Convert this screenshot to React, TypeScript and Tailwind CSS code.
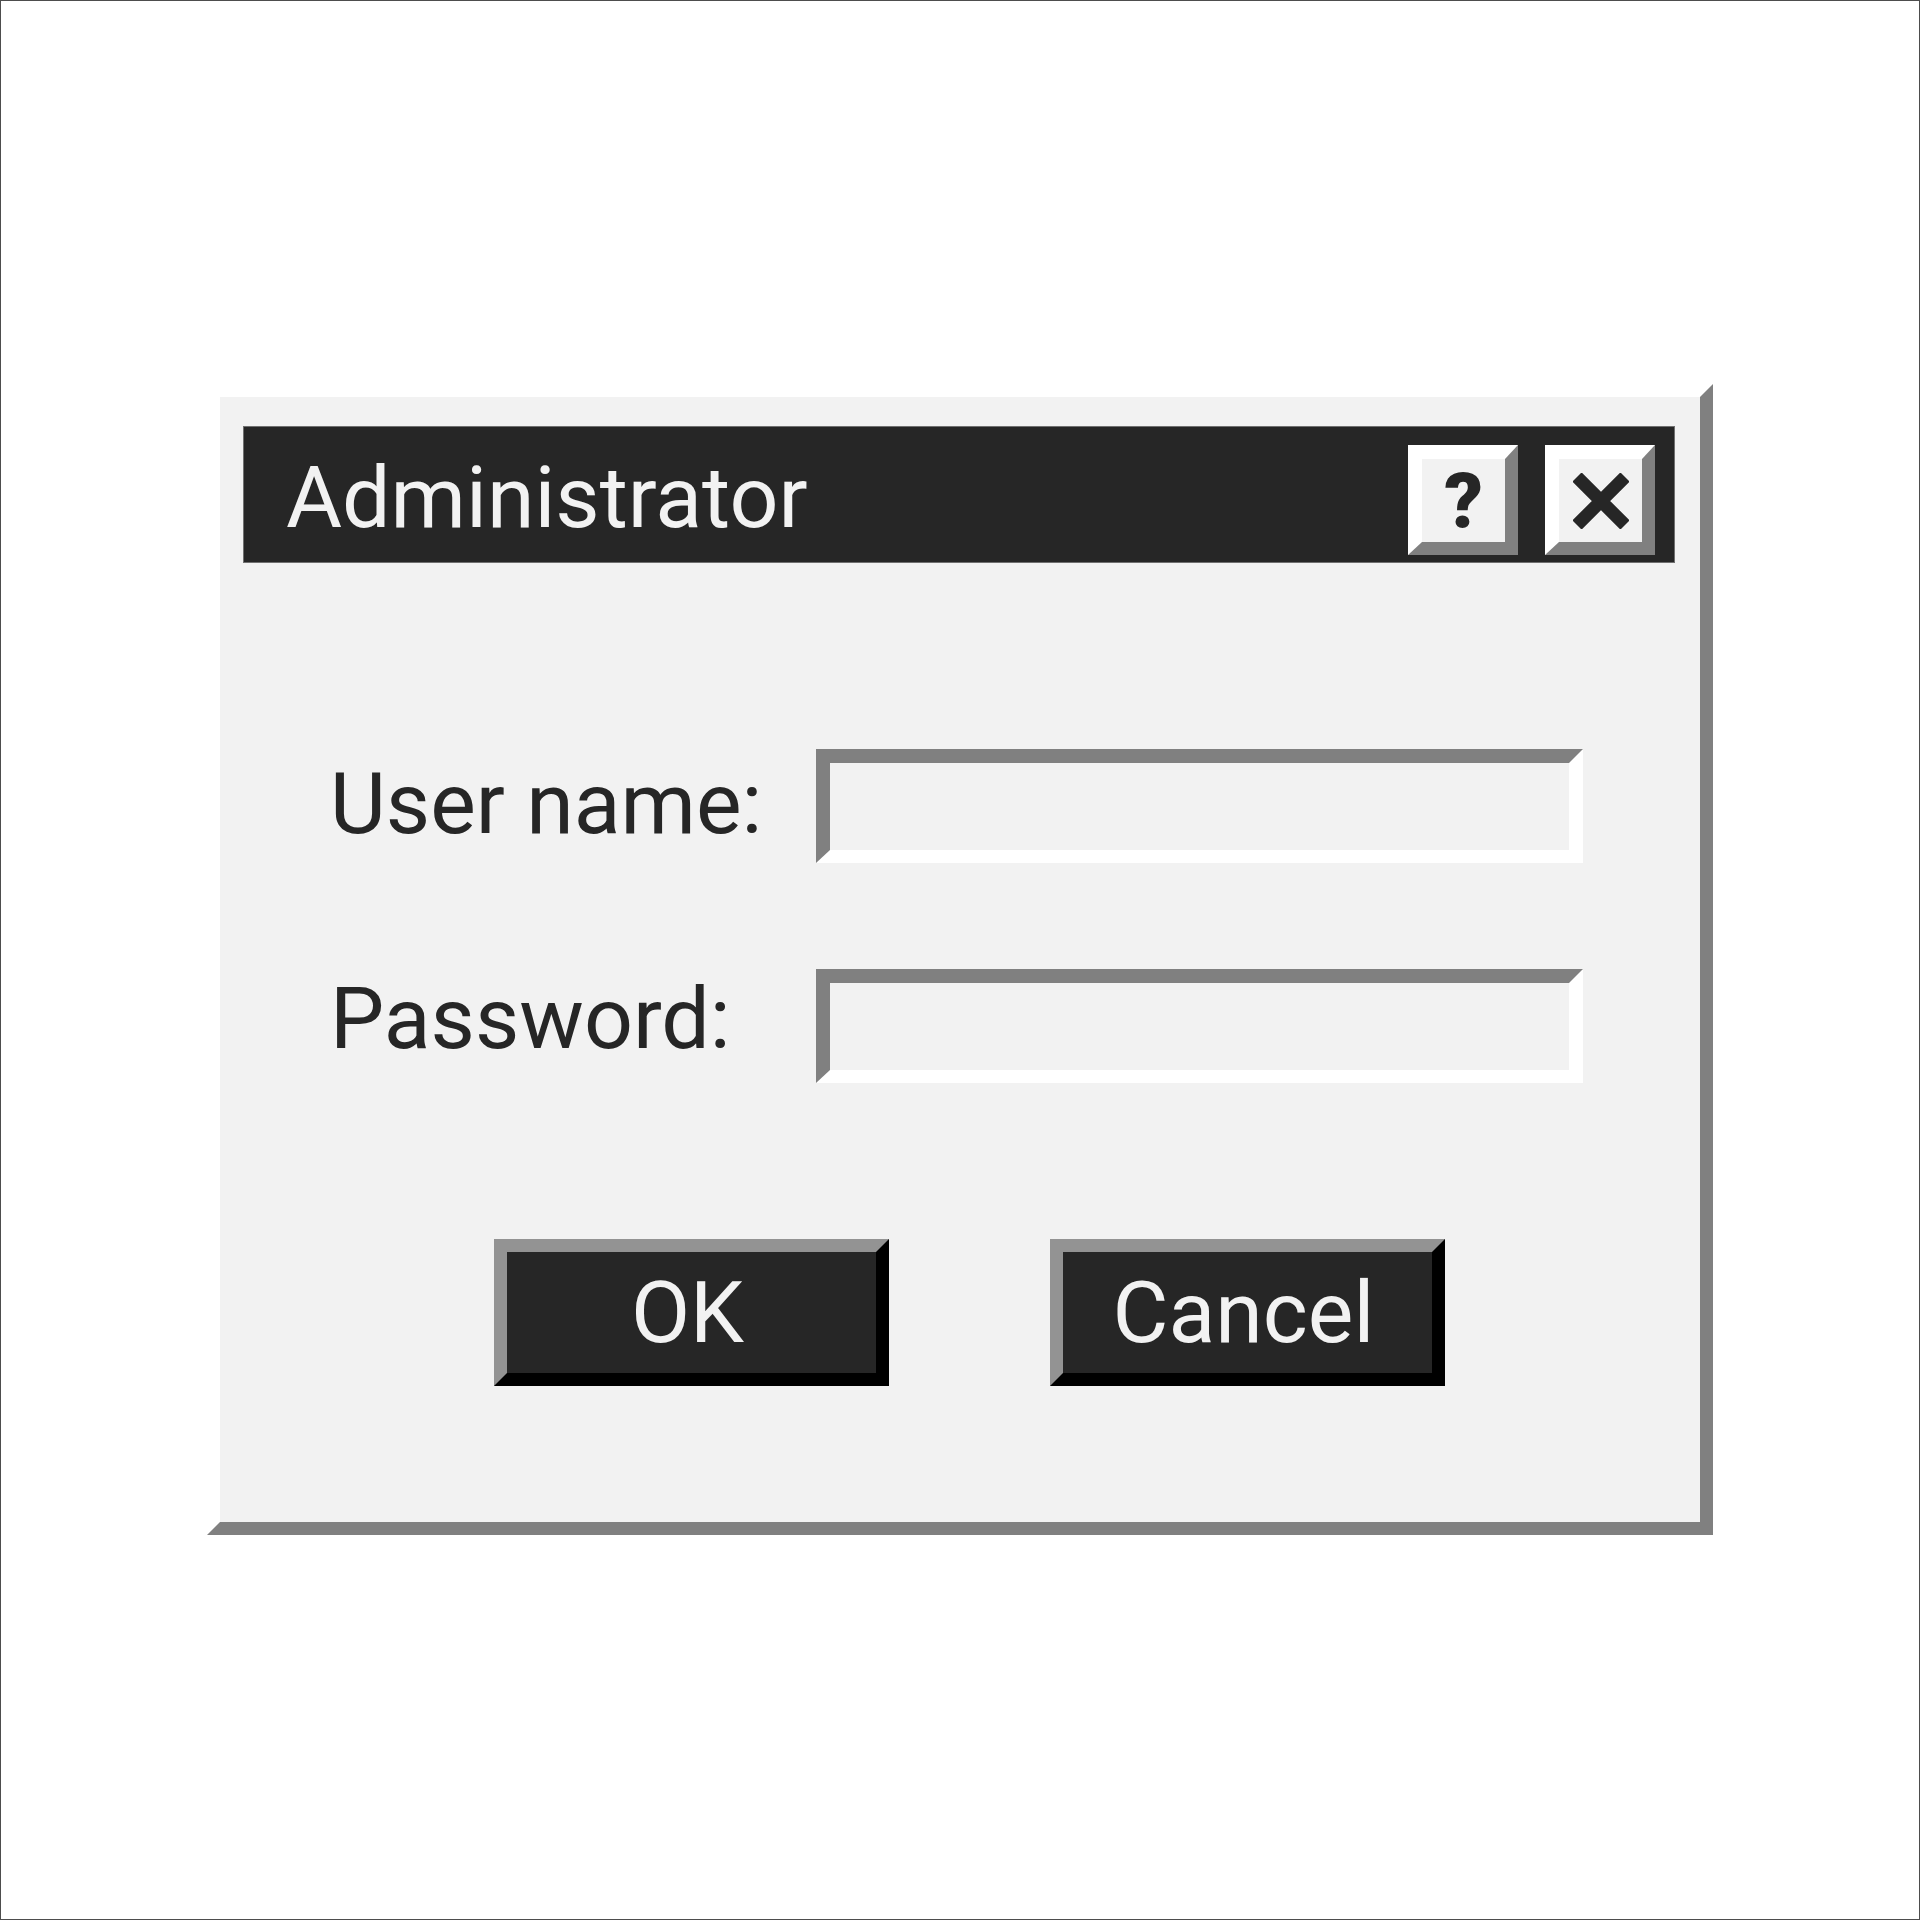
import React from 'react';

function TitleButton({ children }: { children: React.ReactNode }) {
  return (
    <div className="w-[110px] h-[110px] border-t-[14px] border-l-[14px] border-r-[13px] border-b-[13px] border-t-white border-l-white border-r-[#808080] border-b-[#808080] bg-[#f2f2f2] bg-clip-padding flex items-center justify-center">
      {children}
    </div>
  );
}

function Field() {
  return (
    <div className="w-[767px] h-[114px] border-t-[14px] border-l-[14px] border-r-[14px] border-b-[13px] border-t-[#808080] border-l-[#808080] border-r-white border-b-white bg-[#f2f2f2] bg-clip-padding" />
  );
}

function DialogButton({ label }: { label: string }) {
  return (
    <button className="w-[395px] h-[147px] border-[13px] border-t-[#939393] border-l-[#939393] border-r-black border-b-black bg-[#262626] bg-clip-padding flex items-center justify-center pr-[8px] text-[86px] leading-none text-[#f2f2f2]">
      {label}
    </button>
  );
}

export default function App() {
  return (
    <div className="w-[1920px] h-[1920px] bg-white border border-[#4d4d4d] pl-[206px] pt-[383px] font-['Roboto',sans-serif]">
      <div className="w-[1506px] h-[1151px] border-[13px] border-t-transparent border-l-transparent border-r-[#808080] border-b-[#808080] bg-[#f2f2f2] bg-clip-padding pl-[23px] pt-[29px] flex flex-col">
        {/* title bar */}
        <div className="w-[1432px] h-[137px] bg-[#262626] border border-[#707070] flex items-start">
          <span className="ml-[42px] mt-[28px] text-[86px] leading-none text-[#f2f2f2]">Administrator</span>
          <div className="ml-auto mr-[19px] mt-[18px] flex gap-[27px]">
            <TitleButton>
              <span className="font-black text-[76px] leading-none text-[#262626]">?</span>
            </TitleButton>
            <TitleButton>
              <svg width="56" height="56" viewBox="0 0 56 56">
                <path d="M4 4 L52 52 M52 4 L4 52" stroke="#262626" strokeWidth="13" />
              </svg>
            </TitleButton>
          </div>
        </div>

        {/* fields */}
        <div className="mt-[186px] pl-[87px] flex items-start">
          <span className="w-[486px] mt-[12px] text-[86px] leading-none text-[#262626]">User name:</span>
          <Field />
        </div>
        <div className="mt-[106px] pl-[87px] flex items-start">
          <span className="w-[486px] mt-[7px] text-[86px] leading-none text-[#262626]">Password:</span>
          <Field />
        </div>

        {/* actions */}
        <div className="mt-[156px] ml-[251px] flex gap-[161px]">
          <DialogButton label="OK" />
          <DialogButton label="Cancel" />
        </div>
      </div>
    </div>
  );
}
